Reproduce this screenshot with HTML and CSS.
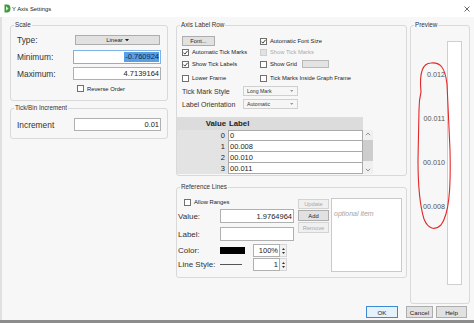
FILE: index.html
```html
<!DOCTYPE html>
<html>
<head>
<meta charset="utf-8">
<link rel="stylesheet" href="styles.css">
</head>
<body>
<div class="window">
  <div class="titlebar">
    <svg class="appicon" viewBox="0 0 7 9"><path d="M0.5 0.5 H3 Q6.5 0.5 6.5 4.5 Q6.5 8.5 3 8.5 H0.5 Z" fill="#3f9a3f"/><path d="M2 2.2 L4.6 4.5 L2 6.8 Z" fill="#d8f0c8"/></svg>
    <span class="title">Y Axis Settings</span>
    <svg class="close" viewBox="0 0 6 6"><path d="M0.5 0.5 L5.5 5.5 M5.5 0.5 L0.5 5.5" stroke="#444" stroke-width="0.8"/></svg>
  </div>
  <div class="content">
    <div class="main">
      <div class="col-left">
        <fieldset class="group">
          <legend>Scale</legend>
          <div class="scale-body">
            <div class="frow h10"><span class="lbl">Type:</span><div class="combo">Linear <svg class="caret" viewBox="0 0 5 3"><path d="M0 0 H5 L2.5 3 Z" fill="#222"/></svg></div></div>
            <div class="frow mt5"><span class="lbl">Minimum:</span><div class="input focus h14"><span class="sel">-0.760924</span></div></div>
            <div class="frow mt3"><span class="lbl">Maximum:</span><div class="input h13">4.7139164</div></div>
            <div class="frow mt5 rev"><span class="cb"><span class="box"></span>Reverse Order</span></div>
          </div>
        </fieldset>
        <fieldset class="group tick">
          <legend>Tick/Bin Increment</legend>
          <div class="tick-body">
            <div class="frow"><span class="lbl w57">Increment</span><div class="input h13">0.01</div></div>
          </div>
        </fieldset>
      </div>

      <div class="col-mid">
        <fieldset class="group">
          <legend>Axis Label Row</legend>
          <div class="axis-body">
            <div class="arow"><div class="c1"><span class="btn font-btn">Font...</span></div><span class="cb"><span class="box"><svg viewBox="0 0 7 7"><path d="M1.4 3.6 L2.9 5.1 L5.6 1.8" fill="none" stroke="#222" stroke-width="0.9"/></svg></span>Automatic Font Size</span></div>
            <div class="arow mt1"><div class="c1"><span class="cb"><span class="box"><svg viewBox="0 0 7 7"><path d="M1.4 3.6 L2.9 5.1 L5.6 1.8" fill="none" stroke="#222" stroke-width="0.9"/></svg></span>Automatic Tick Marks</span></div><span class="cb disabled"><span class="box"></span>Show Tick Marks</span></div>
            <div class="arow mt2"><div class="c1"><span class="cb"><span class="box"><svg viewBox="0 0 7 7"><path d="M1.4 3.6 L2.9 5.1 L5.6 1.8" fill="none" stroke="#222" stroke-width="0.9"/></svg></span>Show Tick Labels</span></div><span class="cb grid-cb"><span class="box"></span>Show Grid</span><span class="swatch"></span></div>
            <div class="arow mt4"><div class="c1"><span class="cb"><span class="box"></span>Lower Frame</span></div><span class="cb"><span class="box"></span>Tick Marks Inside Graph Frame</span></div>
            <div class="arow mt3"><span class="big-lbl">Tick Mark Style</span><div class="dd">Long Mark<svg class="dcaret" viewBox="0 0 5 3"><path d="M0 0 H5 L2.5 3 Z" fill="#999"/></svg></div></div>
            <div class="arow mt3"><span class="big-lbl">Label Orientation</span><div class="dd">Automatic<svg class="dcaret" viewBox="0 0 5 3"><path d="M0 0 H5 L2.5 3 Z" fill="#999"/></svg></div></div>
            <div class="table">
              <div class="th v">Value</div><div class="th l">Label</div><div class="th-blank"></div>
              <div class="tv">0</div><div class="tl first">0</div>
              <div class="scroll">
                <svg class="sarrow" viewBox="0 0 6 4"><path d="M1 3.2 L3 1 L5 3.2" fill="none" stroke="#777" stroke-width="0.8"/></svg>
                <div class="thumb"></div>
                <svg class="sarrow" viewBox="0 0 6 4"><path d="M1 0.8 L3 3 L5 0.8" fill="none" stroke="#777" stroke-width="0.8"/></svg>
              </div>
              <div class="tv">1</div><div class="tl">00.008</div>
              <div class="tv">2</div><div class="tl">00.010</div>
              <div class="tv">3</div><div class="tl">00.011</div>
            </div>
          </div>
        </fieldset>

        <fieldset class="group ref">
          <legend>Reference Lines</legend>
          <div class="ref-body">
            <div class="ref-form">
              <div class="rrow h8 allow"><span class="cb"><span class="box"></span>Allow Ranges</span></div>
              <div class="rrow mt3"><span class="rlbl">Value:</span><div class="input h14 w74">1.9764964</div></div>
              <div class="rrow mt4"><span class="rlbl">Label:</span><div class="input h14 w74"></div></div>
              <div class="rrow mt3"><span class="rlbl">Color:</span><span class="black"></span>
                <div class="spin"><div class="sfield">100%</div><div class="sarrows"><svg viewBox="0 0 5 3"><path d="M0 3 H5 L2.5 0 Z" fill="#333"/></svg><svg viewBox="0 0 5 3"><path d="M0 0 H5 L2.5 3 Z" fill="#333"/></svg></div></div>
              </div>
              <div class="rrow mt1"><span class="rlbl">Line Style:</span><span class="line"></span>
                <div class="spin s2"><div class="sfield h14">1</div><div class="sarrows"><svg viewBox="0 0 5 3"><path d="M0 3 H5 L2.5 0 Z" fill="#333"/></svg><svg viewBox="0 0 5 3"><path d="M0 0 H5 L2.5 3 Z" fill="#333"/></svg></div></div>
              </div>
            </div>
            <div class="ref-btns">
              <span class="btn dis b-upd">Update</span>
              <span class="btn b-add">Add</span>
              <span class="btn dis b-rem">Remove</span>
            </div>
            <div class="ref-list"><span class="opt">optional item</span></div>
          </div>
        </fieldset>
      </div>

      <fieldset class="group preview">
        <legend>Preview</legend>
        <div class="prev-body">
          <div class="plabels">
            <span>0.012</span>
            <span>00.011</span>
            <span>00.010</span>
            <span>00.008</span>
          </div>
          <div class="pbar"></div>
        </div>
      </fieldset>
    </div>
    <div class="buttons">
      <span class="btn ok">OK</span>
      <span class="btn cancel">Cancel</span>
      <span class="btn help">Help</span>
    </div>
  </div>
  <div class="bottombar"></div>
  <svg class="annot" viewBox="0 0 474 323"><path d="M421 92 C419 72 423 63 431 63 C440 62 445 67 447 84 L450 150 C451 190 449 214 441 225 C435 231 428 229 424 219 C420 206 418 190 418 160 L419 110 C419 100 420 96 421 92 Z" fill="none" stroke="#e02828" stroke-width="1.1"/></svg>
</div>
</body>
</html>
```
FILE: styles.css
```css
* { box-sizing: border-box; }
html, body { margin: 0; padding: 0; }
body {
  width: 474px; height: 323px; overflow: hidden;
  font-family: "Liberation Sans", Arial, sans-serif;
  color: #222; background: #f7f7f7;
}
.window { position: relative; width: 474px; height: 323px; display: flex; flex-direction: column; }
.titlebar { height: 17px; flex: none; background: #fff; display: flex; align-items: center; padding: 0 4px 0 4px; }
.appicon { width: 7px; height: 9px; display: block; }
.title { font-size: 5.9px; margin-left: 1px; color: #222; }
.close { width: 6px; height: 6px; margin-left: auto; display: block; }

.content { flex: 1; display: flex; flex-direction: column; border-left: 2px solid #e0e0e0; padding: 4px 0 0 8px; background: #f7f7f7; }
.main { display: flex; align-items: flex-start; }
.col-left { width: 158px; display: flex; flex-direction: column; }
.col-mid { width: 231px; margin-left: 8px; display: flex; flex-direction: column; }

.group { margin: 0; padding: 0; border: 1px solid #d9d9d9; border-radius: 3px; min-width: 0; }
legend { font-size: 6.3px; line-height: 8px; padding: 0 1px; margin-left: 3px; color: #333; }

.frow { display: flex; align-items: center; }
.h8 { height: 8px; }
.h10 { height: 10px; }
.h13 { height: 13px; }
.h14 { height: 14px; }
.mt1 { margin-top: 1px; }
.mt2 { margin-top: 2px; }
.mt3 { margin-top: 3px; }
.mt4 { margin-top: 4px; }
.mt5 { margin-top: 5px; }

.scale-body { padding: 6px 6px 8px 6px; }
.lbl { width: 56px; font-size: 8.4px; color: #333; flex: none; }
.lbl.w57 { width: 57px; }
.combo { width: 85px; height: 10px; margin-left: 2px; background: #e1e1e1; border: 1px solid #adadad; font-size: 6px; display: flex; align-items: center; justify-content: center; gap: 2px; }
.caret { width: 4px; height: 2.5px; display: block; }
.input { width: 88px; background: #fff; border: 1px solid #b0b0b0; font-size: 7.5px; display: flex; align-items: center; justify-content: flex-end; padding-right: 1px; color: #222; }
.input.focus { border-color: #7fb2e5; }
.sel { background: #5a9fe3; color: #10284f; padding: 0 0 0 1px; line-height: 10px; }
.rev { padding-left: 60px; height: 7px; }

.group.tick { margin-top: 3px; }
.tick-body { padding: 6px 6px 7px 6px; }

.cb { display: inline-flex; align-items: center; font-size: 5.8px; color: #222; white-space: nowrap; }
.cb .box { width: 7px; height: 7px; border: 1px solid #707070; background: #fff; margin-right: 3px; flex: none; display: block; position: relative; }
.cb .box svg { position: absolute; left: -1px; top: -1px; width: 7px; height: 7px; }
.cb.disabled { color: #ababab; }
.cb.disabled .box { background: #e2e2e2; border-color: #cfcfcf; }

.axis-body { padding: 7px 0 1px 0; }
.arow { display: flex; align-items: center; height: 10px; padding-left: 5px; }
.arow .c1 { width: 78px; flex: none; display: flex; align-items: center; }
.btn { display: inline-flex; align-items: center; justify-content: center; font-size: 5.8px; background: #e1e1e1; border: 1px solid #adadad; color: #222; }
.font-btn { width: 33px; height: 10px; }
.swatch { width: 27px; height: 8px; margin-left: 5px; background: #e3e3e3; border: 1px solid #b9b9b9; }
.grid-cb { width: 37px; }
.big-lbl { width: 61px; font-size: 7px; color: #333; flex: none; white-space: nowrap; }
.dd { width: 55px; height: 10px; border: 1px solid #d0d0d0; background: #f6f6f6; font-size: 5.2px; display: flex; align-items: center; padding-left: 3px; color: #333; }
.dcaret { width: 3.5px; height: 2px; margin-left: auto; margin-right: 4px; display: block; }

.table { margin-top: 8px; width: 196px; display: grid; grid-template-columns: 51px 135px 10px; grid-template-rows: 13px repeat(4, 11px); font-size: 7.5px; }
.th { background: #dcdcdc; font-weight: bold; font-size: 7.8px; display: flex; align-items: center; }
.th.v { justify-content: flex-end; padding-right: 2px; }
.th.l { padding-left: 1px; }
.tv { background: #e3e3e3; display: flex; align-items: center; justify-content: flex-end; padding-right: 3px; }
.tl { background: #fff; border: 1px solid #a9a9a9; border-top: none; display: flex; align-items: center; padding-left: 1px; }
.tl.first { border-top: 1px solid #a9a9a9; }
.scroll { grid-column: 3; grid-row: 2 / 6; background: #f0f0f0; display: flex; flex-direction: column; align-items: center; }
.sarrow { width: 6px; height: 4px; display: block; margin: 2px 0; }
.thumb { width: 10px; height: 21px; background: #cdcdcd; margin-top: 2px; }
.scroll .sarrow:last-child { margin-top: auto; margin-bottom: 2px; }

.group.ref { margin-top: 7px; }
.ref-body { display: flex; align-items: flex-start; padding: 7px 0 5px 1px; }
.ref-form { width: 116px; flex: none; }
.rrow { display: flex; align-items: center; }
.allow { padding-left: 6px; }
.rlbl { width: 42px; font-size: 8px; color: #333; flex: none; white-space: nowrap; }
.w74 { width: 74px; }
.black { width: 25px; height: 7px; background: #000; flex: none; }
.line { width: 22px; height: 1px; background: #555; flex: none; }
.spin { display: flex; margin-left: 8px; }
.spin.s2 { margin-left: 11px; }
.sfield { width: 27px; height: 13px; background: #fff; border: 1px solid #b0b0b0; font-size: 7.5px; display: flex; align-items: center; justify-content: flex-end; padding-right: 1px; }
.sarrows { width: 7px; display: flex; flex-direction: column; justify-content: center; gap: 2px; align-items: center; background: #f2f2f2; border: 1px solid #d6d6d6; border-left: none; }
.sarrows svg { width: 3px; height: 2px; display: block; }
.ref-btns { width: 31px; margin-left: 4px; margin-top: 1px; display: flex; flex-direction: column; gap: 1px; flex: none; }
.ref-btns .btn { width: 31px; }
.b-upd { height: 10px; }
.b-add { height: 11px; }
.b-rem { height: 11px; }
.btn.dis { background: #f0f0f0; border-color: #d3d3d3; color: #a8a8a8; }
.ref-list { width: 71px; height: 74px; margin-left: 2px; background: #fff; border: 1px solid #cacaca; padding: 3px 2px; flex: none; }
.opt { font-style: italic; color: #a5a5a5; font-size: 7px; }

.group.preview { width: 60px; height: 283px; margin-left: 3px; flex: none; }
.prev-body { display: flex; padding: 12px 0 0 0; }
.plabels { width: 36px; display: flex; flex-direction: column; align-items: flex-end; padding: 29px 2px 0 0; gap: 35px; flex: none; }
.plabels span { font-size: 7.2px; line-height: 9px; color: #555; }
.pbar { width: 15px; height: 244px; background: #fff; border: 1px solid #cfcfcf; }

.buttons { display: flex; justify-content: flex-end; margin-top: 2px; padding-right: 7px; }
.buttons .btn { height: 12px; font-size: 6.2px; }
.ok { width: 32px; background: #e5f1fb; border-color: #3c8ad6; }
.cancel { width: 27px; margin-left: 8px; }
.help { width: 31px; margin-left: 3px; }

.bottombar { height: 3px; flex: none; background: #8c8c8c; }
.annot { position: absolute; left: 0; top: 0; width: 474px; height: 323px; pointer-events: none; }
```
